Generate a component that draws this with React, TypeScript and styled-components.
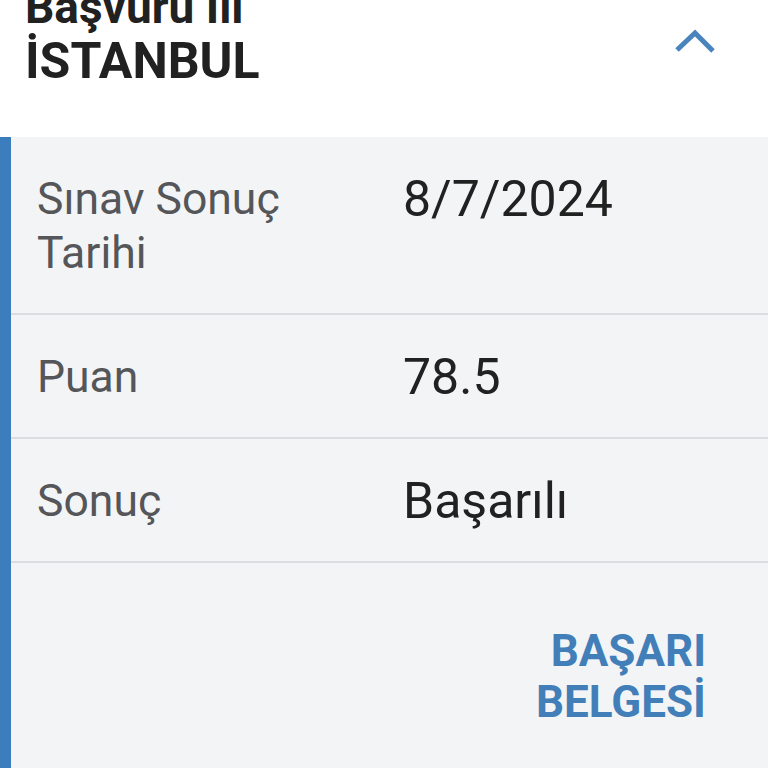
import styled, { createGlobalStyle } from "styled-components";

const GlobalStyle = createGlobalStyle`
  html, body {
    margin: 0;
    padding: 0;
    background: #f3f4f6;
    font-family: Roboto, "Noto Sans", Arial, sans-serif;
  }
`;

type Row = { label: string; value: string };

const rows: Row[] = [
  { label: "Sınav Sonuç Tarihi", value: "8/7/2024" },
  { label: "Puan", value: "78.5" },
  { label: "Sonuç", value: "Başarılı" },
];

export default function App() {
  return (
    <>
      <GlobalStyle />
      <Page>
        <Header>
          <TitleBlock>
            <Caption>Başvuru İli</Caption>
            <City>İSTANBUL</City>
          </TitleBlock>
          <ToggleButton aria-label="collapse">
            <svg width="44" height="30" viewBox="0 0 44 30">
              <polyline
                points="4,23 22,6 40,24"
                fill="none"
                stroke="#4a84bd"
                strokeWidth="5"
              />
            </svg>
          </ToggleButton>
        </Header>

        <Body>
          {rows.map((row) => (
            <InfoRow key={row.label}>
              <Label>{row.label}</Label>
              <Value>{row.value}</Value>
            </InfoRow>
          ))}
          <Actions>
            <TextButton>BAŞARI BELGESİ</TextButton>
          </Actions>
        </Body>
      </Page>
    </>
  );
}

const Page = styled.div`
  width: 768px;
  height: 768px;
  overflow: hidden;
  display: flex;
  flex-direction: column;
  background: #f3f4f6;
`;

const Header = styled.div`
  display: flex;
  justify-content: space-between;
  align-items: flex-start;
  height: 137px;
  flex-shrink: 0;
  background: #ffffff;
  padding: 0 51px 0 25px;
  box-sizing: border-box;
`;

const TitleBlock = styled.div`
  display: flex;
  flex-direction: column;
  margin-top: -20px;
  color: #212121;
  font-weight: 700;
`;

const Caption = styled.div`
  font-size: 46px;
  line-height: 54px;
`;

const City = styled.div`
  font-size: 50px;
  line-height: 54px;
`;

const ToggleButton = styled.button`
  display: flex;
  border: none;
  background: none;
  padding: 0;
  margin-top: 27px;
  cursor: pointer;
`;

const Body = styled.div`
  flex: 1;
  display: flex;
  flex-direction: column;
  border-left: 11px solid #3b7dbd;
`;

const InfoRow = styled.div`
  display: grid;
  grid-template-columns: 366px 1fr;
  align-items: start;
  padding: 35px 0 33px 26px;
  border-bottom: 2px solid #dcdde0;
`;

const Label = styled.div`
  font-size: 44.5px;
  line-height: 54px;
  color: #555659;
  max-width: 280px;
`;

const Value = styled.div`
  font-size: 50px;
  line-height: 54px;
  color: #212121;
`;

const Actions = styled.div`
  display: flex;
  justify-content: flex-end;
  padding: 63px 62px 0 0;
`;

const TextButton = styled.button`
  width: 190px;
  border: none;
  background: none;
  padding: 0;
  text-align: right;
  font-family: Roboto, "Noto Sans", Arial, sans-serif;
  font-size: 44px;
  line-height: 51px;
  font-weight: 700;
  color: #427fb9;
  cursor: pointer;
`;
